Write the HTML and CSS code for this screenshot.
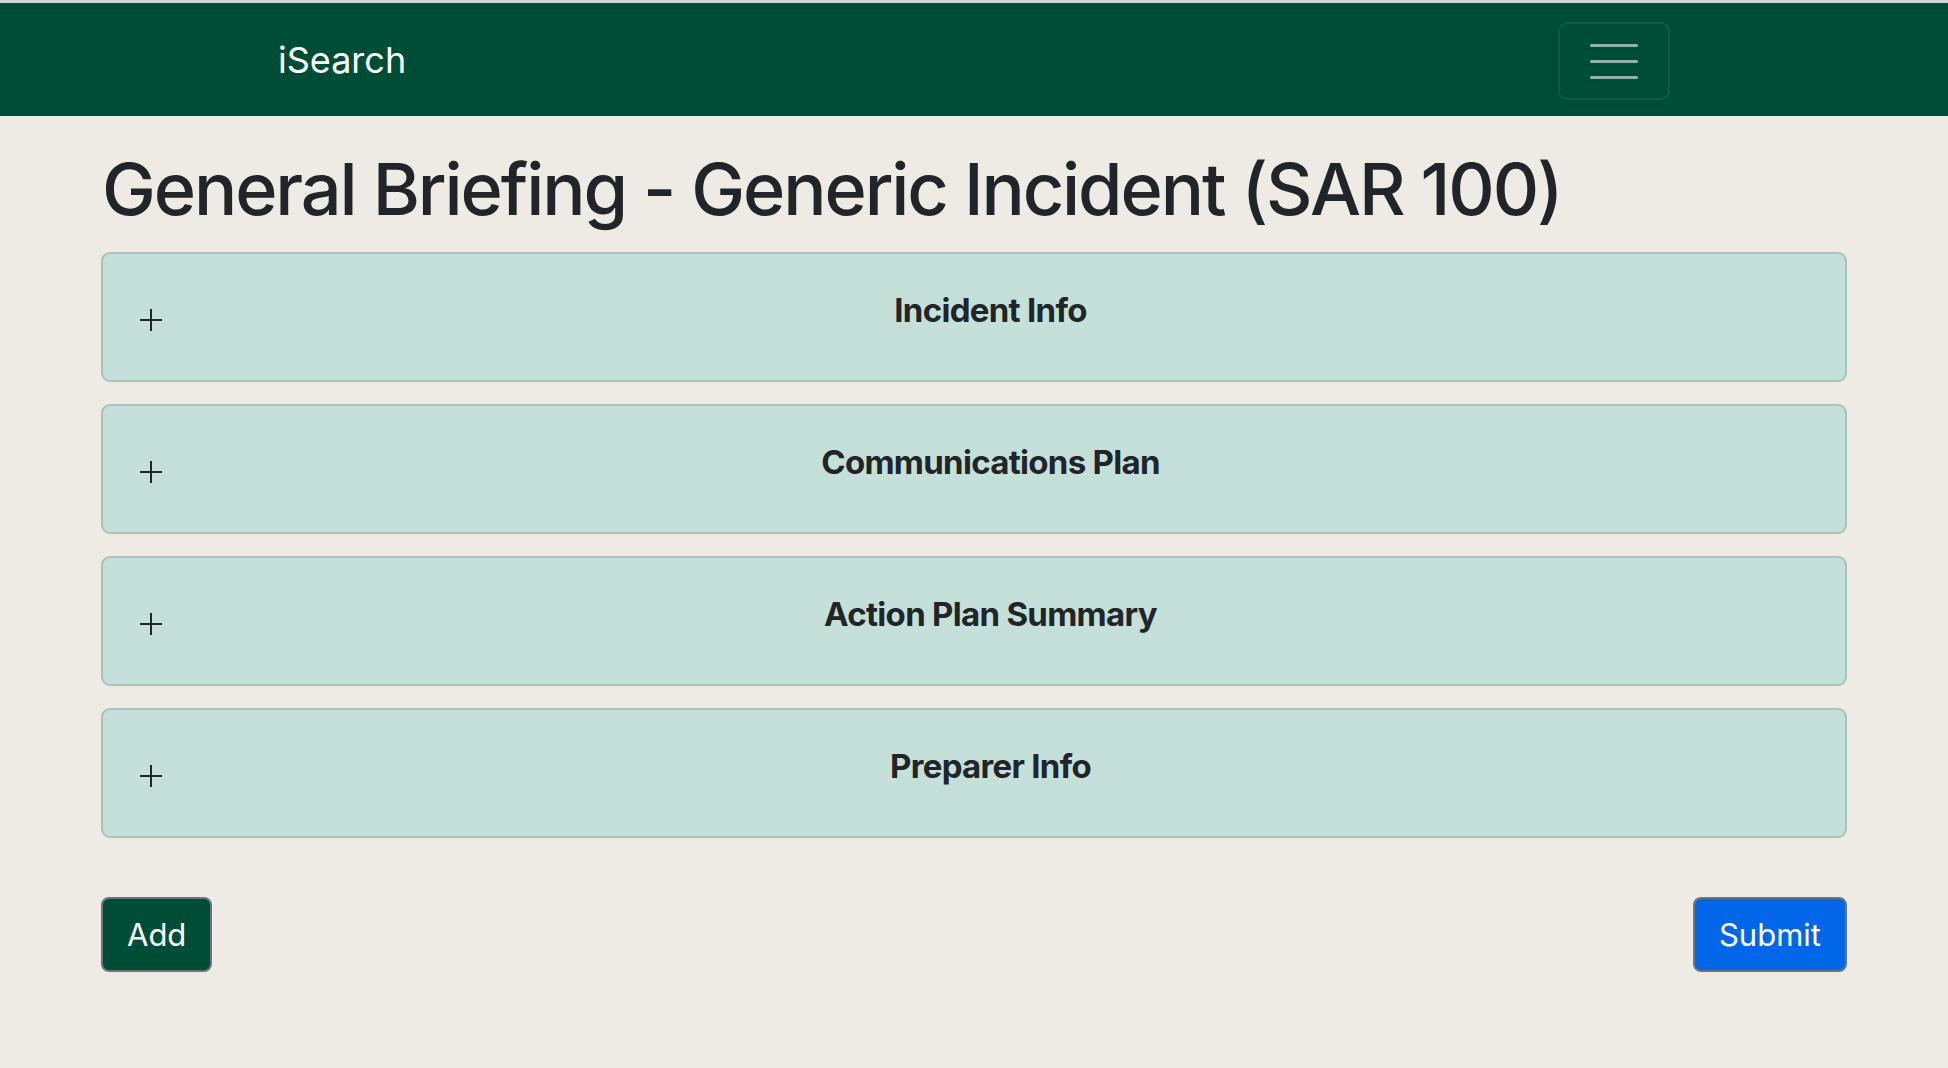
FILE: index.html
```html
<!DOCTYPE html>
<html lang="en">
<head>
<meta charset="utf-8">
<title>iSearch - General Briefing</title>
<link rel="stylesheet" href="styles.css">
</head>
<body>
<nav class="navbar">
  <div class="nav-inner">
    <a class="brand" href="#">iSearch</a>
    <button class="toggler" type="button" aria-label="Toggle navigation">
      <svg width="48" height="36" viewBox="0 0 48 36">
        <path d="M1.5 2.5H46.5M1.5 18.5H46.5M1.5 34.5H46.5" stroke="#8fb3a6" stroke-width="3" stroke-linecap="round" fill="none"/>
      </svg>
    </button>
  </div>
</nav>
<main class="page">
  <h1 class="title">General Briefing - Generic Incident (SAR 100)</h1>
  <div class="accordion">
    <div class="acc-item">
      <span class="acc-icon"><svg width="22" height="22" viewBox="0 0 22 22"><path d="M11 0V22M0 11H22" stroke="#212529" stroke-width="2" fill="none"/></svg></span>
      <h5 class="acc-title">Incident Info</h5>
    </div>
    <div class="acc-item">
      <span class="acc-icon"><svg width="22" height="22" viewBox="0 0 22 22"><path d="M11 0V22M0 11H22" stroke="#212529" stroke-width="2" fill="none"/></svg></span>
      <h5 class="acc-title">Communications Plan</h5>
    </div>
    <div class="acc-item">
      <span class="acc-icon"><svg width="22" height="22" viewBox="0 0 22 22"><path d="M11 0V22M0 11H22" stroke="#212529" stroke-width="2" fill="none"/></svg></span>
      <h5 class="acc-title">Action Plan Summary</h5>
    </div>
    <div class="acc-item">
      <span class="acc-icon"><svg width="22" height="22" viewBox="0 0 22 22"><path d="M11 0V22M0 11H22" stroke="#212529" stroke-width="2" fill="none"/></svg></span>
      <h5 class="acc-title">Preparer Info</h5>
    </div>
  </div>
  <div class="actions">
    <button class="btn btn-add" type="button">Add</button>
    <button class="btn btn-submit" type="button">Submit</button>
  </div>
</main>
</body>
</html>
```
FILE: styles.css
```css
* { box-sizing: border-box; }
html, body { margin: 0; padding: 0; }
body {
  background: #eeebe5;
  font-family: Inter, "Noto Sans", "Liberation Sans", sans-serif;
  color: #212529;
  min-height: 1068px;
}
.navbar {
  border-top: 3px solid #d1d5d5;
  background: #004d36;
  height: 116px;
}
.nav-inner {
  width: 1392px;
  margin: 0 auto;
  height: 113px;
  display: flex;
  align-items: center;
  justify-content: space-between;
}
.brand {
  color: #ffffff;
  text-decoration: none;
  font-size: 36px;
  font-weight: 400;
  letter-spacing: 0;
}
.toggler {
  width: 112px;
  height: 78px;
  margin-top: 2px;
  background: transparent;
  border: 2px solid #13593f;
  border-radius: 9px;
  display: flex;
  align-items: center;
  justify-content: center;
  padding: 0;
}
.page {
  width: 1746px;
  margin: 0 auto;
  padding-top: 30px;
}
.title {
  margin: 0 0 20px;
  padding-left: 1px;
  font-size: 72px;
  font-weight: 500;
  line-height: 1.2;
  letter-spacing: -2.1px;
}
.accordion {
  display: flex;
  flex-direction: column;
  gap: 22px;
}
.acc-item {
  height: 130px;
  background: #c5e0d9;
  border: 2px solid #a9c3bc;
  border-radius: 9px;
  display: flex;
  align-items: center;
  padding: 0 36px 0 37px;
}
.acc-icon {
  width: 32px;
  display: flex;
  margin-top: 6px;
}
.acc-title {
  flex: 1;
  margin: 0 0 14px;
  text-align: center;
  font-size: 33px;
  font-weight: 700;
  line-height: 1.2;
  letter-spacing: -0.7px;
}
.actions {
  display: flex;
  justify-content: space-between;
  margin-top: 59px;
}
.btn {
  height: 75px;
  padding: 0 24px;
  border: 2px solid #6c757d;
  border-radius: 8px;
  color: #ffffff;
  font-family: Inter, "Noto Sans", "Liberation Sans", sans-serif;
  font-size: 31px;
  font-weight: 400;
}
.btn-add { background: #004d36; }
.btn-submit { background: #0266e8; }
```
